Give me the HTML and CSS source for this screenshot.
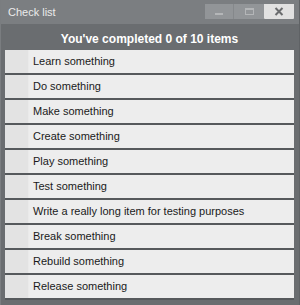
FILE: index.html
```html
<!DOCTYPE html>
<html>
<head>
<meta charset="utf-8">
<link rel="stylesheet" href="styles.css">
</head>
<body>
<div class="window">
  <div class="titlebar">
    <span class="title">Check list</span>
    <div class="controls">
      <div class="btn btn-min"><svg width="10" height="8" viewBox="0 0 10 8"><rect x="1" y="5" width="8" height="2" fill="#b4b6b8"/></svg></div>
      <div class="btn btn-max"><svg width="11" height="9" viewBox="0 0 11 9"><rect x="1.5" y="1.5" width="8" height="6" fill="none" stroke="#b4b6b8" stroke-width="1"/><rect x="1" y="1" width="9" height="2" fill="#b4b6b8"/></svg></div>
      <div class="btn btn-close"><svg width="10" height="9" viewBox="0 0 10 9"><path d="M1.5 1 L8.5 8 M8.5 1 L1.5 8" stroke="#6a6c6e" stroke-width="2"/></svg></div>
    </div>
  </div>
  <div class="body">
    <div class="header">You've completed 0 of 10 items</div>
    <div class="list">
      <div class="row"><div class="check"></div><div class="label">Learn something</div></div>
      <div class="row"><div class="check"></div><div class="label">Do something</div></div>
      <div class="row"><div class="check"></div><div class="label">Make something</div></div>
      <div class="row"><div class="check"></div><div class="label">Create something</div></div>
      <div class="row"><div class="check"></div><div class="label">Play something</div></div>
      <div class="row"><div class="check"></div><div class="label">Test something</div></div>
      <div class="row"><div class="check"></div><div class="label">Write a really long item for testing purposes</div></div>
      <div class="row"><div class="check"></div><div class="label">Break something</div></div>
      <div class="row"><div class="check"></div><div class="label">Rebuild something</div></div>
      <div class="row"><div class="check"></div><div class="label">Release something</div></div>
    </div>
  </div>
</div>
</body>
</html>
```
FILE: styles.css
```css
html, body {
  margin: 0;
  padding: 0;
  background: #6a6d70;
}
.window {
  width: 300px;
  height: 305px;
  background: #6a6d70;
  font-family: "Liberation Sans", Arial, sans-serif;
  box-sizing: border-box;
  border-left: 1px solid #7a7d80;
  border-right: 1px solid #5f6265;
  display: flex;
  flex-direction: column;
}
.titlebar {
  height: 24px;
  background: #7b7e81;
  display: flex;
  align-items: flex-start;
  justify-content: space-between;
  box-sizing: border-box;
  padding: 4px 5px 0 7px;
}
.title {
  color: #ebebeb;
  font-size: 11px;
  line-height: 16px;
}
.controls {
  display: flex;
  height: 15px;
}
.btn {
  height: 15px;
  display: flex;
  align-items: center;
  justify-content: center;
  background: #929598;
}
.btn-min { width: 28px; border-right: 1px solid #85888b; }
.btn-max { width: 30px; }
.btn-close { width: 30px; background: #e1e1e1; border-radius: 0 0 1px 1px; }
.body {
  flex: 1;
  padding: 0 5px 0 4px;
  display: flex;
  flex-direction: column;
}
.header {
  height: 26px;
  color: #ffffff;
  font-weight: bold;
  font-size: 12px;
  text-align: center;
  line-height: 30px;
}
.list {
  display: flex;
  flex-direction: column;
  gap: 2px;
  background: #56595c;
  padding-bottom: 2px;
}
.row {
  height: 23px;
  display: flex;
  background: #ededed;
}
.check {
  width: 23px;
  background: #e3e3e3;
  border-right: 1px solid #eaeaea;
}
.label {
  padding-left: 4px;
  font-size: 11px;
  color: #1a1a1a;
  line-height: 23px;
}
```
